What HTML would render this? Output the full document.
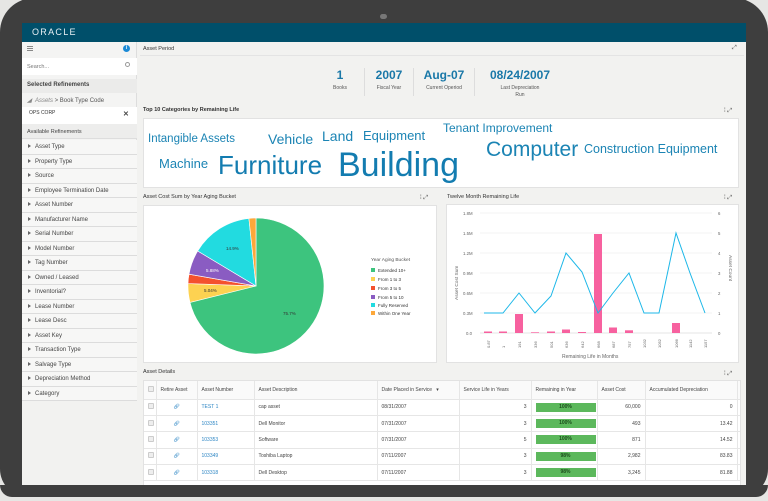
<!DOCTYPE html>
<html><head><meta charset="utf-8"><style>
*{margin:0;padding:0;box-sizing:border-box}
body{width:768px;height:501px;overflow:hidden;background:#e6e6e4;font-family:"Liberation Sans",sans-serif;position:relative}
.a{position:absolute}
.frame{left:0;top:-2px;width:768px;height:499px;background:#3e3e3e;border-radius:34px 34px 28px 28px}
.screen{left:22px;top:23px;width:724px;height:462px;background:#f2f2f0;overflow:hidden}
.hdr{left:22px;top:23px;width:724px;height:19px;background:#004f6a}
.t{font-size:6px;color:#333;white-space:nowrap}
.side{left:22px;top:42px;width:115px;height:358px;background:#f4f4f3;border-right:1px solid #ddd}
.ri{left:22px;width:115px;height:14.5px;border-bottom:1px solid #dcdcdc;font-size:6px;color:#444;padding-left:6px;line-height:14px;background:#f7f7f6}
.ri:before{content:"";display:inline-block;border-left:3px solid #666;border-top:2px solid transparent;border-bottom:2px solid transparent;margin-right:4px;vertical-align:0}
.box{background:#fff;border:1px solid #e2e2e2}
.wc{color:#1b84b4;white-space:nowrap;line-height:1}
.kn{color:#1a78a8;font-weight:bold;font-size:12px;text-align:center;white-space:nowrap}
.kl{color:#555;font-size:5px;text-align:center;white-space:nowrap}
.ic{font-size:6px;color:#555}
td,th{font-size:5px;color:#444;white-space:nowrap;border-right:1px solid #e6e6e6;border-bottom:1px solid #e6e6e6;height:16.4px;padding:0 4px;font-weight:normal;text-align:left}
th{height:18px;background:#fafafa}
.cb{display:inline-block;width:6px;height:6px;border:1px solid #ccc;background:#eee;border-radius:1px}
.lk{color:#2d86c4}
.bar{display:block;background:#5cb85c;color:#1c4d1c;text-align:center;font-size:5px;height:9px;line-height:9px;width:60px;font-weight:bold}
</style></head><body>
<div class="a frame"></div>
<div class="a" style="left:380px;top:14px;width:7px;height:5px;border-radius:3px;background:#777"></div>
<div class="a screen"></div>
<div class="a hdr"></div>
<div class="a" style="left:32px;top:27px;color:#e8f0f4;font-size:9px;letter-spacing:1.3px">ORACLE</div>

<!-- sidebar -->
<div class="a side"></div>
<div class="a" style="left:27px;top:46px;width:6px;height:5px;border-top:1px solid #888;border-bottom:1px solid #888"></div>
<div class="a" style="left:27px;top:48px;width:6px;height:1px;background:#888"></div>
<div class="a" style="left:123px;top:45px;width:7px;height:7px;border-radius:50%;background:#1b8ad6;color:#fff;font-size:5px;text-align:center;line-height:7px;font-weight:bold">i</div>
<div class="a" style="left:22px;top:58px;width:115px;height:17px;background:#fff"></div>
<div class="a t" style="left:27px;top:64px;color:#777;font-size:5.5px">Search...</div>
<div class="a" style="left:125px;top:62px;width:5px;height:5px;border:1px solid #999;border-radius:50%"></div>
<div class="a" style="left:22px;top:79px;width:115px;height:14px;background:#ebebea"></div>
<div class="a t" style="left:27px;top:82px;font-weight:bold;color:#444">Selected Refinements</div>
<div class="a t" style="left:27px;top:97px;color:#555"><span style="color:#888;font-style:italic">◢ &nbsp;Assets</span> &gt; Book Type Code</div>
<div class="a" style="left:22px;top:107px;width:115px;height:17px;background:#fff"></div>
<div class="a t" style="left:29px;top:110px;font-size:5px">OPS CORP</div>
<div class="a t" style="left:123px;top:110px;font-size:7px;font-weight:bold;color:#444">✕</div>
<div class="a" style="left:22px;top:124px;width:115px;height:15px;background:#ededec;border-bottom:1px solid #ddd"></div>
<div class="a t" style="left:27px;top:129px;font-size:5.5px;color:#444">Available Refinements</div>
<div class="a ri" style="top:140px">Asset Type</div>
<div class="a ri" style="top:154.5px">Property Type</div>
<div class="a ri" style="top:169px">Source</div>
<div class="a ri" style="top:183.5px">Employee Termination Date</div>
<div class="a ri" style="top:198px">Asset Number</div>
<div class="a ri" style="top:212.5px">Manufacturer Name</div>
<div class="a ri" style="top:227px">Serial Number</div>
<div class="a ri" style="top:241.5px">Model Number</div>
<div class="a ri" style="top:256px">Tag Number</div>
<div class="a ri" style="top:270.5px">Owned / Leased</div>
<div class="a ri" style="top:285px">Inventorial?</div>
<div class="a ri" style="top:299.5px">Lease Number</div>
<div class="a ri" style="top:314px">Lease Desc</div>
<div class="a ri" style="top:328.5px">Asset Key</div>
<div class="a ri" style="top:343px">Transaction Type</div>
<div class="a ri" style="top:357.5px">Salvage Type</div>
<div class="a ri" style="top:372px">Depreciation Method</div>
<div class="a ri" style="top:386.5px">Category</div>

<!-- Asset period -->
<div class="a t" style="left:143px;top:46px;font-size:5.5px">Asset Period</div>
<div class="a ic" style="left:732px;top:45px">⤢</div>
<div class="a" style="left:140px;top:55px;width:604px;height:1px;background:#e4e4e4"></div>
<div class="a kn" style="left:325px;top:68px;width:30px">1</div>
<div class="a kl" style="left:325px;top:85px;width:30px">Books</div>
<div class="a" style="left:364px;top:68px;width:1px;height:28px;background:#ddd"></div>
<div class="a kn" style="left:370px;top:68px;width:38px">2007</div>
<div class="a kl" style="left:370px;top:85px;width:38px">Fiscal Year</div>
<div class="a" style="left:413px;top:68px;width:1px;height:28px;background:#ddd"></div>
<div class="a kn" style="left:418px;top:68px;width:52px">Aug-07</div>
<div class="a kl" style="left:418px;top:85px;width:52px">Current Operiod</div>
<div class="a" style="left:474px;top:68px;width:1px;height:28px;background:#ddd"></div>
<div class="a kn" style="left:480px;top:68px;width:80px">08/24/2007</div>
<div class="a kl" style="left:480px;top:85px;width:80px;line-height:7px">Last Depreciation<br>Run</div>

<!-- word cloud -->
<div class="a t" style="left:143px;top:107px;font-weight:bold;font-size:5.5px">Top 10 Categories by Remaining Life</div>
<div class="a ic" style="left:724px;top:108px">⁞ ⤢</div>
<div class="a box" style="left:143px;top:118px;width:596px;height:70px"></div>
<div class="a wc" style="left:148px;top:134px;font-size:11.5px">Intangible Assets</div>
<div class="a wc" style="left:268px;top:132px;font-size:14px">Vehicle</div>
<div class="a wc" style="left:322px;top:129px;font-size:14px">Land</div>
<div class="a wc" style="left:363px;top:129px;font-size:13px">Equipment</div>
<div class="a wc" style="left:443px;top:122px;font-size:12px">Tenant Improvement</div>
<div class="a wc" style="left:159px;top:157px;font-size:13px">Machine</div>
<div class="a wc" style="left:218px;top:152px;font-size:26px;color:#137cb0">Furniture</div>
<div class="a wc" style="left:338px;top:148px;font-size:34px;color:#137cb0">Building</div>
<div class="a wc" style="left:486px;top:139px;font-size:21px">Computer</div>
<div class="a wc" style="left:584px;top:143px;font-size:12.5px">Construction Equipment</div>

<!-- pie panel -->
<div class="a t" style="left:143px;top:194px;font-size:5.5px">Asset Cost Sum by Year Aging Bucket</div>
<div class="a ic" style="left:420px;top:195px">⁞ ⤢</div>
<div class="a box" style="left:143px;top:205px;width:294px;height:158px"></div>
<div class="a t" style="left:447px;top:194px;font-size:5.5px">Twelve Month Remaining Life</div>
<div class="a ic" style="left:724px;top:195px">⁞ ⤢</div>
<div class="a box" style="left:446px;top:204px;width:293px;height:159px"></div>

<svg class="a" style="left:0;top:0" width="768" height="501" viewBox="0 0 768 501">
 <g stroke="#fff" stroke-width="0.6">
  <path d="M256,286 L256,218 A68,68 0 1 1 190,302.4 Z" fill="#3dc47e"/>
  <path d="M256,286 L190,302.4 A68,68 0 0 1 188,283.6 Z" fill="#fdd251"/>
  <path d="M256,286 L188,283.6 A68,68 0 0 1 189,274.2 Z" fill="#f4512e"/>
  <path d="M256,286 L189,274.2 A68,68 0 0 1 197.7,251 Z" fill="#8a5cc2"/>
  <path d="M256,286 L197.7,251 A68,68 0 0 1 248.9,218.4 Z" fill="#22dbe0"/>
  <path d="M256,286 L248.9,218.4 A68,68 0 0 1 256,218 Z" fill="#fda83a"/>
 </g>
 <g font-family="Liberation Sans" font-size="4.5" fill="#333">
  <text x="226" y="250">14.9%</text>
  <text x="206" y="272" fill="#fff">5.88%</text>
  <text x="204" y="292">5.04%</text>
  <text x="283" y="315">75.7%</text>
  <text x="371" y="261" font-size="4.8" fill="#555">Year Aging Bucket</text>
  <rect x="371" y="268" width="4" height="4" fill="#3dc47e"/><text x="378" y="272">Extended 10+</text>
  <rect x="371" y="277" width="4" height="4" fill="#fdd251"/><text x="378" y="281">From 1 to 3</text>
  <rect x="371" y="286" width="4" height="4" fill="#f4512e"/><text x="378" y="290">From 3 to 5</text>
  <rect x="371" y="295" width="4" height="4" fill="#8a5cc2"/><text x="378" y="299">From 5 to 10</text>
  <rect x="371" y="303" width="4" height="4" fill="#22dbe0"/><text x="378" y="307">Fully Reserved</text>
  <rect x="371" y="311" width="4" height="4" fill="#fda83a"/><text x="378" y="315">Within One Year</text>
 </g>
 <g stroke="#e8e8e8" stroke-width="0.6">
  <line x1="480" y1="213" x2="712" y2="213"/><line x1="480" y1="233" x2="712" y2="233"/>
  <line x1="480" y1="253" x2="712" y2="253"/><line x1="480" y1="273" x2="712" y2="273"/>
  <line x1="480" y1="293" x2="712" y2="293"/><line x1="480" y1="313" x2="712" y2="313"/>
  <line x1="480" y1="333" x2="712" y2="333" stroke="#ccc"/>
 </g>
 <g font-family="Liberation Sans" font-size="4.3" fill="#666">
  <text x="463" y="215">1.8M</text><text x="463" y="235">1.5M</text><text x="463" y="255">1.2M</text>
  <text x="463" y="275">0.9M</text><text x="463" y="295">0.6M</text><text x="463" y="315">0.3M</text><text x="466" y="335">0.0</text>
  <text x="718" y="215">6</text><text x="718" y="235">5</text><text x="718" y="255">4</text><text x="718" y="275">3</text><text x="718" y="295">2</text><text x="718" y="315">1</text><text x="718" y="335">0</text>
  <text transform="translate(458,300) rotate(-90)" font-size="4.8">Asset Cost Sum</text>
  <text transform="translate(729,255) rotate(90)" font-size="4.8">Asset Count</text>
  <text x="562" y="358" font-size="5">Remaining Life in Months</text>
 </g>
 <g font-family="Liberation Sans" font-size="4" fill="#666">
  <text transform="translate(490,348) rotate(-90)">0.87</text><text transform="translate(505,348) rotate(-90)">1</text>
  <text transform="translate(521,348) rotate(-90)">191</text><text transform="translate(537,348) rotate(-90)">336</text>
  <text transform="translate(553,348) rotate(-90)">501</text><text transform="translate(568,348) rotate(-90)">636</text>
  <text transform="translate(584,348) rotate(-90)">642</text><text transform="translate(600,348) rotate(-90)">668</text>
  <text transform="translate(615,348) rotate(-90)">687</text><text transform="translate(631,348) rotate(-90)">757</text>
  <text transform="translate(646,348) rotate(-90)">1032</text><text transform="translate(661,348) rotate(-90)">1052</text>
  <text transform="translate(678,348) rotate(-90)">1066</text><text transform="translate(692,348) rotate(-90)">1142</text>
  <text transform="translate(707,348) rotate(-90)">1157</text>
 </g>
 <g fill="#f7619f">
  <rect x="484" y="331.5" width="8" height="1.5"/><rect x="499" y="331.5" width="8" height="1.5"/>
  <rect x="515" y="314" width="8" height="19"/><rect x="531" y="332.3" width="8" height="0.7"/>
  <rect x="547" y="331.5" width="8" height="1.5"/><rect x="562" y="329.5" width="8" height="3.5"/>
  <rect x="578" y="332" width="8" height="1"/><rect x="594" y="234" width="8" height="99"/>
  <rect x="609" y="327.5" width="8" height="5.5"/><rect x="625" y="330.3" width="8" height="2.7"/>
  <rect x="672" y="323" width="8" height="10"/>
 </g>
 <polyline fill="none" stroke="#1cb7e8" stroke-width="1" points="484,313 503,313 519,293 535,313 551,296 566,253 582,272 598,313 613,293 629,273 644,313 659,313 676,233 690,273 705,313"/>
</svg>

<!-- table -->
<div class="a t" style="left:143px;top:369px;font-size:5.5px">Asset Details</div>
<div class="a ic" style="left:724px;top:371px">⁞ ⤢</div>
<div class="a" style="left:143px;top:380px;width:598px;height:106px;background:#fff;border:1px solid #e2e2e2;overflow:hidden">
<table style="border-collapse:collapse;width:598px;table-layout:fixed">
<colgroup><col style="width:12px"><col style="width:41px"><col style="width:57px"><col style="width:123px"><col style="width:82px"><col style="width:72px"><col style="width:66px"><col style="width:48px"><col style="width:92px"><col></colgroup>
<tr><th><span class="cb"></span></th><th>Retire Asset</th><th>Asset Number</th><th>Asset Description</th><th>Date Placed in Service &nbsp;&nbsp;▾</th><th>Service Life in Years</th><th>Remaining in Year</th><th>Asset Cost</th><th>Accumulated Depreciation</th><th></th></tr>
<tr><td><span class="cb"></span></td><td style="text-align:center" class="lk">🔗︎</td><td class="lk">TEST 1</td><td>cap asset</td><td>08/31/2007</td><td style="text-align:right">3</td><td><span class="bar">100%</span></td><td style="text-align:right">60,000</td><td style="text-align:right">0</td><td></td></tr>
<tr><td><span class="cb"></span></td><td style="text-align:center" class="lk">🔗︎</td><td class="lk">103351</td><td>Dell Monitor</td><td>07/31/2007</td><td style="text-align:right">3</td><td><span class="bar">100%</span></td><td style="text-align:right">493</td><td style="text-align:right">13.42</td><td></td></tr>
<tr><td><span class="cb"></span></td><td style="text-align:center" class="lk">🔗︎</td><td class="lk">103353</td><td>Software</td><td>07/31/2007</td><td style="text-align:right">5</td><td><span class="bar">100%</span></td><td style="text-align:right">871</td><td style="text-align:right">14.52</td><td></td></tr>
<tr><td><span class="cb"></span></td><td style="text-align:center" class="lk">🔗︎</td><td class="lk">103349</td><td>Toshiba Laptop</td><td>07/11/2007</td><td style="text-align:right">3</td><td><span class="bar">98%</span></td><td style="text-align:right">2,982</td><td style="text-align:right">83.83</td><td></td></tr>
<tr><td><span class="cb"></span></td><td style="text-align:center" class="lk">🔗︎</td><td class="lk">103318</td><td>Dell Desktop</td><td>07/11/2007</td><td style="text-align:right">3</td><td><span class="bar">98%</span></td><td style="text-align:right">3,245</td><td style="text-align:right">81.88</td><td></td></tr>
</table></div>
<div class="a" style="left:0;top:485px;width:768px;height:12px;background:#3e3e3e;border-radius:0 0 28px 28px"></div>
</body></html>
